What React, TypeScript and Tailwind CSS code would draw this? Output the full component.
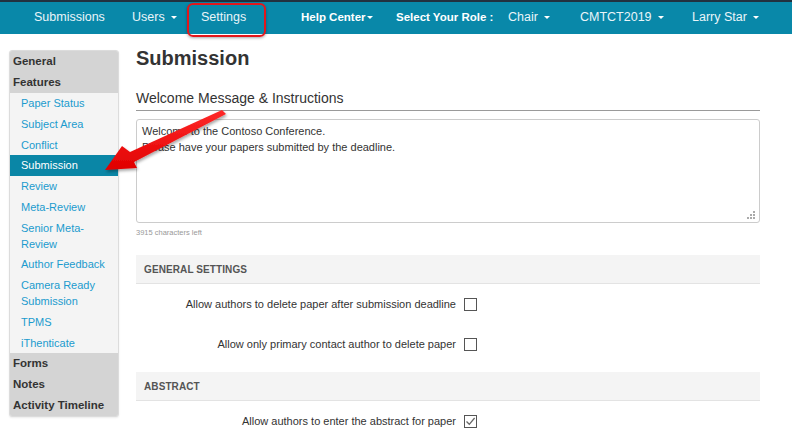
import React from "react";

function NavItem({ w, children, bold, caret, tight }: { w: string; children: React.ReactNode; bold?: boolean; caret?: boolean; tight?: boolean }) {
  return (
    <div className={`${w} shrink-0 flex items-center whitespace-nowrap ${bold ? "font-bold text-[11.5px] text-white" : "text-[12.5px] text-[#e9f5f9]"}`}>
      <span>{children}</span>
      {caret && (
        <span className={`inline-block ${tight ? "ml-[1px]" : "ml-[6px]"} w-0 h-0 border-t-[3px] border-t-white border-x-[3px] border-x-transparent`} />
      )}
    </div>
  );
}

const headers1 = ["General", "Features"];
const items = ["Paper Status", "Subject Area", "Conflict", "Submission", "Review", "Meta-Review", "Senior Meta-Review", "Author Feedback", "Camera Ready Submission", "TPMS", "iThenticate"];
const headers2 = ["Forms", "Notes", "Activity Timeline"];

function Checkbox({ checked }: { checked?: boolean }) {
  return (
    <div className="w-[13px] h-[13px] border border-[#555] bg-white shrink-0 flex items-center justify-center">
      {checked && (
        <svg width="11" height="11" viewBox="0 0 11 11">
          <path d="M1.5 5.5 L4.3 8.3 L9.6 2" fill="none" stroke="#666" strokeWidth="1.3" />
        </svg>
      )}
    </div>
  );
}

function Row({ label, checked }: { label: string; checked?: boolean }) {
  return (
    <div className="h-[40px] flex items-center">
      <div className="w-[328px] text-right text-[11px] text-[#333] pr-[8px]">{label}</div>
      <Checkbox checked={checked} />
    </div>
  );
}

function SectionHeader({ title }: { title: string }) {
  return (
    <div className="h-[29px] bg-[#f4f4f4] border-b border-[#e3e3e3] flex items-center pl-[8px] text-[10px] font-bold text-[#555] tracking-[0.1px]">
      {title}
    </div>
  );
}

export default function App() {
  return (
    <div className="w-[792px] h-[440px] overflow-hidden relative bg-white font-['Liberation_Sans',Arial,sans-serif]">
      <div className="h-[2px] bg-[#22313f]" />
      <nav className="h-[32px] bg-[#0988a9] flex items-center pl-[34px] pb-[1px]">
        <NavItem w="w-[98px]">Submissions</NavItem>
        <NavItem w="w-[69px]" caret>Users</NavItem>
        <NavItem w="w-[100px]">Settings</NavItem>
        <NavItem w="w-[95px]" bold caret tight>Help Center</NavItem>
        <NavItem w="w-[112px]" bold>Select Your Role :</NavItem>
        <NavItem w="w-[72px]" caret>Chair</NavItem>
        <NavItem w="w-[112px]" caret>CMTCT2019</NavItem>
        <NavItem w="w-[90px]" caret>Larry Star</NavItem>
      </nav>

      <div className="flex">
        <aside className="ml-[9px] mt-[16px] w-[110px] self-start border border-[#dcdcdc] rounded-[3px] shadow-[0_1px_2px_rgba(0,0,0,0.08)] overflow-hidden bg-[#f4f4f4]">
          {headers1.map((h) => (
            <div key={h} className="h-[20.8px] bg-[#d4d4d4] pl-[3px] flex items-center text-[11.5px] font-bold text-[#333]">{h}</div>
          ))}
          {items.map((it) => (
            <div
              key={it}
              className={`pl-[11px] pr-[6px] py-[2.4px] leading-[16px] text-[11px] ${it === "Submission" ? "bg-[#0a86a6] text-white" : "text-[#1b9bce]"}`}
            >
              {it}
            </div>
          ))}
          {headers2.map((h) => (
            <div key={h} className="h-[20.8px] bg-[#d4d4d4] pl-[3px] flex items-center text-[11.5px] font-bold text-[#333]">{h}</div>
          ))}
        </aside>

        <main className="ml-[17px] w-[624px] pt-[12px]">
          <h1 className="text-[20px] leading-[24px] font-bold text-[#333]">Submission</h1>
          <h2 className="mt-[19px] text-[14px] leading-[18px] text-[#333] pb-[3px] border-b border-[#9a9a9a]">Welcome Message &amp; Instructions</h2>
          <div className="mt-[8px] h-[104px] border border-[#cccccc] rounded-[3px] pt-[3px] pl-[5px] text-[11px] leading-[16px] text-[#333] relative">
            <div>Welcome to the Contoso Conference.</div>
            <div>Please have your papers submitted by the deadline.</div>
            <svg className="absolute right-[3px] bottom-[2px]" width="9" height="9" viewBox="0 0 9 9">
              <rect x="6" y="0" width="2" height="2" fill="#aaa" />
              <rect x="3" y="3" width="2" height="2" fill="#aaa" />
              <rect x="6" y="3" width="2" height="2" fill="#aaa" />
              <rect x="0" y="6" width="2" height="2" fill="#aaa" />
              <rect x="3" y="6" width="2" height="2" fill="#aaa" />
              <rect x="6" y="6" width="2" height="2" fill="#aaa" />
            </svg>
          </div>
          <div className="mt-[5px] text-[7.5px] leading-[10px] text-[#999]">3915 characters left</div>

          <div className="mt-[17px]">
            <SectionHeader title="GENERAL SETTINGS" />
            <Row label="Allow authors to delete paper after submission deadline" />
            <Row label="Allow only primary contact author to delete paper" />
          </div>
          <div className="mt-[8px]">
            <SectionHeader title="ABSTRACT" />
            <Row label="Allow authors to enter the abstract for paper" checked />
          </div>
        </main>
      </div>

      <div className="absolute left-[187px] top-[3px] w-[79px] h-[34px] border-2 border-[#e3161b] rounded-[6px] shadow-[0_1px_3px_rgba(0,0,0,0.35)] pointer-events-none" />

      <svg className="absolute left-0 top-0 pointer-events-none" width="792" height="440" viewBox="0 0 792 440">
        <defs>
          <filter id="sh" x="-20%" y="-20%" width="140%" height="140%">
            <feDropShadow dx="1" dy="2" stdDeviation="1.5" floodColor="#000" floodOpacity="0.35" />
          </filter>
          <linearGradient id="rg" x1="0" y1="0" x2="0" y2="1">
            <stop offset="0" stopColor="#ff2a2a" />
            <stop offset="1" stopColor="#e00000" />
          </linearGradient>
        </defs>
        <polygon
          points="105,170 122,146 130,152 222,110 226,114 134,162 137,168"
          fill="url(#rg)"
          filter="url(#sh)"
        />
      </svg>
    </div>
  );
}
